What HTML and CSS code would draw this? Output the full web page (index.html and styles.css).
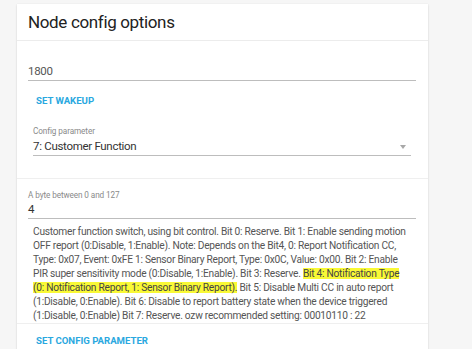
FILE: index.html
```html
<!DOCTYPE html>
<html>
<head>
<meta charset="utf-8">
<link rel="stylesheet" href="styles.css">
</head>
<body>
<div class="page">
  <div class="card">
    <div class="card-header">Node config options</div>
    <div class="section section-wakeup">
      <div class="field">
        <div class="field-value">1800</div>
      </div>
      <div class="btn">SET WAKEUP</div>
      <div class="select">
        <div class="field-label">Config parameter</div>
        <div class="select-row">
          <span class="field-value">7: Customer Function</span>
          <span class="arrow"></span>
        </div>
      </div>
    </div>
    <div class="section section-param">
      <div class="field">
        <div class="field-label">A byte between 0 and 127</div>
        <div class="field-value dark">4</div>
      </div>
      <p class="help">Customer function switch, using bit control. Bit 0: Reserve. Bit 1: Enable sending motion OFF report (0:Disable, 1:Enable). Note: Depends on the Bit4, 0: Report Notification CC, Type: 0x07, Event: 0xFE 1: Sensor Binary Report, Type: 0x0C, Value: 0x00. Bit 2: Enable PIR super sensitivity mode (0:Disable, 1:Enable). Bit 3: Reserve. <span class="hl">Bit 4: Notification Type (0: Notification Report, 1: Sensor Binary Report).</span> Bit 5: Disable Multi CC in auto report (1:Disable, 0:Enable). Bit 6: Disable to report battery state when the device triggered (1:Disable, 0:Enable) Bit 7: Reserve. ozw recommended setting: 00010110 : 22</p>
    </div>
    <div class="actions">
      <div class="btn">SET CONFIG PARAMETER</div>
    </div>
  </div>
</div>
</body>
</html>
```

FILE: styles.css
```css
html, body {
  margin: 0;
  padding: 0;
  background: #ffffff;
  font-family: Roboto, "Liberation Sans", sans-serif;
}
.page {
  width: 472px;
  height: 349px;
  background: #f6f6f6;
  padding: 4px 0 0 17px;
  box-sizing: border-box;
  overflow: hidden;
}
.card {
  width: 411px;
  background: #ffffff;
  box-shadow: 0 1px 2px rgba(0,0,0,0.12), 0 0 1px rgba(0,0,0,0.08);
}
.card-header {
  height: 36px;
  display: flex;
  align-items: center;
  padding-left: 11px;
  font-size: 17px;
  letter-spacing: -0.35px;
  color: #222;
  border-bottom: 1px solid #ececec;
}
.section {
  padding: 0 12px 0 11px;
}
.section-wakeup {
  padding-top: 22px;
  padding-bottom: 22px;
  border-bottom: 1px solid #efefef;
}
.field {
  border-bottom: 1px solid #bdbdbd;
}
.field-value {
  font-size: 11.5px;
  letter-spacing: -0.3px;
  line-height: 16px;
  color: #555;
  padding-bottom: 1px;
}
.field-value.dark {
  color: #333;
}
.field-label {
  font-size: 8.2px;
  letter-spacing: -0.1px;
  line-height: 11px;
  color: #8a8a8a;
}
.btn {
  display: inline-flex;
  align-items: center;
  height: 36px;
  padding: 0 8px;
  margin-top: 1px;
  font-size: 9.6px;
  font-weight: 700;
  color: #2aa8e0;
}
.select {
  margin: 8px 5px 0 5px;
}
.select-row {
  display: flex;
  align-items: center;
  justify-content: space-between;
  margin-top: 1px;
  border-bottom: 1px solid #bdbdbd;
}
.select-row .field-value {
  color: #333;
}
.arrow {
  width: 0;
  height: 0;
  border-left: 3.5px solid transparent;
  border-right: 3.5px solid transparent;
  border-top: 4px solid #a8a8a8;
  margin-right: 5px;
}
.section-param {
  padding-top: 11px;
}
.help {
  margin: 6px 5px 0 5px;
  font-size: 10.2px;
  letter-spacing: -0.25px;
  line-height: 14px;
  color: #555;
}
.hl {
  background: #f9f936;
  color: #444;
}
.actions {
  border-top: 1px solid #efefef;
  padding-left: 11px;
}
.actions .btn {
  margin-top: 0;
  height: 32px;
}
```
